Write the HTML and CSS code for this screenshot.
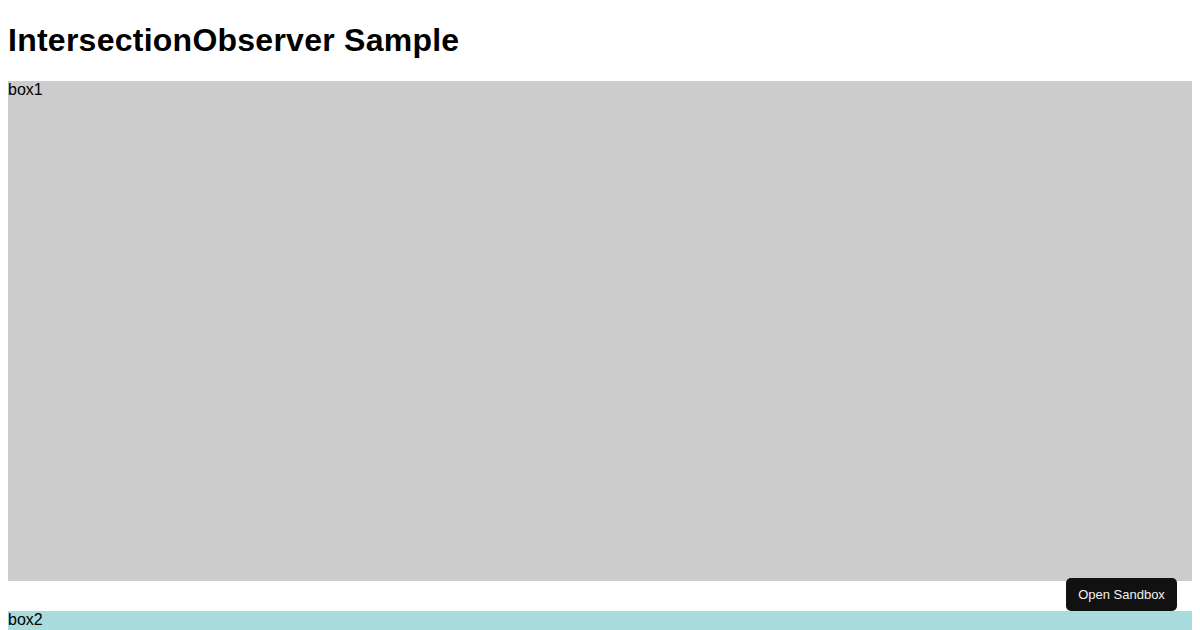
FILE: index.html
```html
<!DOCTYPE html>
<html>
<head>
<meta charset="utf-8">
<link rel="stylesheet" href="styles.css">
</head>
<body>
<h1 class="title">IntersectionObserver Sample</h1>
<div class="box box1">box1</div>
<div class="box box2">box2</div>
<button class="sandbox">Open Sandbox</button>
</body>
</html>
```
FILE: styles.css
```css
html { overflow: hidden; }
body {
  margin: 0 8px;
  padding: 0;
  font-family: "Liberation Sans", Arial, sans-serif;
  font-size: 16px;
  color: #000;
  background: #fff;
}
.title {
  font-size: 32px;
  font-weight: bold;
  line-height: 37px;
  letter-spacing: 0.25px;
  margin: 0;
  padding: 22px 0 22px;
}
.box {
  height: 500px;
  line-height: 18px;
}
.box1 {
  background: #cccccc;
  margin-bottom: 30px;
}
.box2 {
  background: #a9dcdc;
}
.sandbox {
  position: fixed;
  right: 23px;
  bottom: 19px;
  width: 111px;
  height: 33px;
  padding: 0;
  border: none;
  border-radius: 5px;
  background: #111111;
  color: #f2f2f2;
  font-family: "Liberation Sans", Arial, sans-serif;
  font-size: 13px;
}
```
